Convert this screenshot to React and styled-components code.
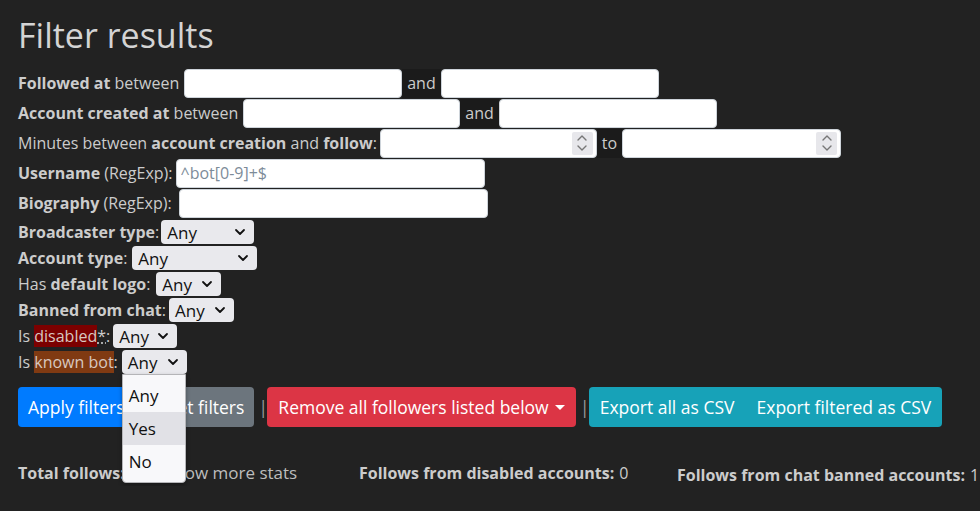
import React from "react";
import styled, { createGlobalStyle } from "styled-components";

const GlobalStyle = createGlobalStyle`
  html, body { margin: 0; padding: 0; background: #222222; }
  body {
    color: #cccccc;
    font-family: "Open Sans", "Noto Sans", "Liberation Sans", sans-serif;
    font-size: 16px;
    overflow: hidden;
  }
  * { box-sizing: border-box; }
`;

const Page = styled.div`
  padding: 11px 18px 0 18px;
`;

const Title = styled.h1`
  margin: 0 0 9px 0;
  font-size: 34px;
  font-weight: 400;
  line-height: 48px;
  color: #d4d4d4;
`;

const Row = styled.div`
  display: flex;
  align-items: center;
  height: ${(p) => p.$h || 30}px;
  margin-top: ${(p) => p.$mt || 0}px;
  white-space: nowrap;
`;

const Label = styled.span`
  margin-right: ${(p) => (p.$gap === undefined ? 5 : p.$gap)}px;
  b { font-weight: 700; }
`;

const TextInput = styled.input`
  width: ${(p) => p.$w}px;
  height: 29px;
  border: 1px solid #ced4da;
  border-radius: 4px;
  background: #fff;
  font: inherit;
  padding: 0 4px;
  color: #333;
  &::placeholder { color: #7d8c99; }
`;

const Joiner = styled.span`
  height: 29px;
  display: flex;
  align-items: center;
  padding: 0 5px;
  background: #1b1b1b;
`;

const NumberBox = styled.div`
  width: ${(p) => p.$w}px;
  height: 29px;
  display: flex;
  align-items: center;
  background: #fff;
  border: 1px solid #ced4da;
  border-radius: 4px;
  padding-right: 3px;
`;

const BareInput = styled.input`
  flex: 1;
  min-width: 0;
  border: none;
  outline: none;
  background: transparent;
  font: inherit;
  padding: 0 4px;
`;

const Spinner = styled.div`
  width: 21px;
  height: 23px;
  background: #e7e7eb;
  border-radius: 2px;
  display: flex;
  align-items: center;
  justify-content: center;
`;

const SelectWrap = styled.div`
  position: relative;
`;

const SelectBox = styled.div`
  width: ${(p) => p.$w}px;
  height: 24px;
  display: flex;
  align-items: center;
  justify-content: space-between;
  padding: 0 8px 0 6px;
  background: #e9e9ed;
  border-radius: 4px;
  color: #111;
  font-size: 17px;
`;

const Menu = styled.div`
  position: absolute;
  top: 100%;
  left: 0;
  width: 64px;
  background: #f8f8fa;
  border: 1px solid #b5b5b8;
  border-radius: 0 0 4px 4px;
  box-shadow: 0 2px 4px rgba(0, 0, 0, 0.3);
  padding: 4px 0;
  z-index: 10;
`;

const MenuItem = styled.div`
  height: 33px;
  display: flex;
  align-items: center;
  padding: 0 6px;
  font-size: 17px;
  color: #111;
  background: ${(p) => (p.$active ? "#e1e1e6" : "transparent")};
`;

const Mark = styled.span`
  background: ${(p) => p.$bg};
  color: #d8c8c0;
`;

const Abbr = styled.abbr`
  text-decoration: underline dotted;
  cursor: help;
`;

const ButtonRow = styled.div`
  display: flex;
  align-items: center;
  gap: 4px;
  margin-top: 12px;
`;

const Button = styled.button`
  height: 40px;
  padding: 0 ${(p) => p.$px || 11}px;
  font: inherit;
  font-size: 17.5px;
  color: #fff;
  border: none;
  border-radius: ${(p) => p.$radius || "4px"};
  background: ${(p) => p.$bg};
  display: flex;
  align-items: center;
  white-space: nowrap;
  flex-shrink: 0;
`;

const Caret = styled.span`
  display: inline-block;
  margin-left: 6px;
  border-left: 5px solid transparent;
  border-right: 5px solid transparent;
  border-top: 5px solid #fff;
`;

const Sep = styled.span`
  width: 5px;
  text-align: center;
  overflow: visible;
  color: #999;
  font-size: 18px;
`;

const Group = styled.div`
  display: flex;
  flex-shrink: 0;
`;

const StatsRow = styled.div`
  display: flex;
  margin-top: 32px;
  white-space: nowrap;
`;

const Stat = styled.div`
  width: ${(p) => p.$w}px;
  flex-shrink: 0;
  margin-top: ${(p) => p.$mt || 0}px;
  display: flex;
  align-items: center;
  b { font-weight: 700; margin-right: 5px; }
`;

const LinkText = styled.span`
  margin-left: 26px;
  color: #bdbdbd;
  font-size: 17px;
`;

function Chevron({ size = 12 }) {
  return (
    <svg width={size} height={size} viewBox="0 0 12 12" fill="none">
      <path d="M2 4l4 4 4-4" stroke="#111" strokeWidth="1.8" strokeLinecap="round" strokeLinejoin="round" />
    </svg>
  );
}

function SpinIcon() {
  return (
    <svg width="12" height="18" viewBox="0 0 12 18" fill="none">
      <path d="M2 6l4-4 4 4" stroke="#777" strokeWidth="1.4" strokeLinecap="round" strokeLinejoin="round" />
      <path d="M2 12l4 4 4-4" stroke="#777" strokeWidth="1.4" strokeLinecap="round" strokeLinejoin="round" />
    </svg>
  );
}

function Select({ w, open }) {
  return (
    <SelectWrap>
      <SelectBox $w={w}>
        <span>Any</span>
        <Chevron />
      </SelectBox>
      {open && (
        <Menu>
          <MenuItem>Any</MenuItem>
          <MenuItem $active>Yes</MenuItem>
          <MenuItem>No</MenuItem>
        </Menu>
      )}
    </SelectWrap>
  );
}

export default function App() {
  return (
    <>
      <GlobalStyle />
      <Page>
        <Title>Filter results</Title>
        <Row>
          <Label><b>Followed at</b> between</Label>
          <TextInput $w={218} />
          <Joiner>and</Joiner>
          <TextInput $w={218} />
        </Row>
        <Row>
          <Label><b>Account created at</b> between</Label>
          <TextInput $w={217} />
          <Joiner>and</Joiner>
          <TextInput $w={218} />
        </Row>
        <Row>
          <Label $gap={3}>Minutes between <b>account creation</b> and <b>follow</b>:</Label>
          <NumberBox $w={217}>
            <BareInput />
            <Spinner><SpinIcon /></Spinner>
          </NumberBox>
          <Joiner>to</Joiner>
          <NumberBox $w={219}>
            <BareInput />
            <Spinner><SpinIcon /></Spinner>
          </NumberBox>
        </Row>
        <Row>
          <Label $gap={3}><b>Username</b> (RegExp):</Label>
          <TextInput $w={309} placeholder="^bot[0-9]+$" />
        </Row>
        <Row>
          <Label $gap={7}><b>Biography</b> (RegExp):</Label>
          <TextInput $w={309} />
        </Row>
        <Row $h={26} $mt={1}>
          <Label $gap={2}><b>Broadcaster type</b>:</Label>
          <Select w={93} />
        </Row>
        <Row $h={26}>
          <Label $gap={5}><b>Account type</b>:</Label>
          <Select w={125} />
        </Row>
        <Row $h={26}>
          <Label $gap={6}>Has <b>default logo</b>:</Label>
          <Select w={65} />
        </Row>
        <Row $h={26}>
          <Label $gap={3}><b>Banned from chat</b>:</Label>
          <Select w={65} />
        </Row>
        <Row $h={26}>
          <Label $gap={3}>Is <Mark $bg="#7c0000">disabled</Mark><Abbr title="">*</Abbr>:</Label>
          <Select w={64} />
        </Row>
        <Row $h={26}>
          <Label $gap={4}>Is <Mark $bg="#803a12">known bot</Mark>:</Label>
          <Select w={65} open />
        </Row>
        <ButtonRow>
          <Button $bg="#007bff" $px={10}>Apply filters</Button>
          <Button $bg="#6c757d" $px={10}>Reset filters</Button>
          <Sep>|</Sep>
          <Button $bg="#dc3545">Remove all followers listed below<Caret /></Button>
          <Sep>|</Sep>
          <Group>
            <Button $bg="#17a2b8" $radius="4px 0 0 4px">Export all as CSV</Button>
            <Button $bg="#17a2b8" $radius="0 4px 4px 0">Export filtered as CSV</Button>
          </Group>
        </ButtonRow>
        <StatsRow>
          <Stat $w={341}>
            <b>Total follows:</b>1
            <LinkText>Show more stats</LinkText>
          </Stat>
          <Stat $w={318}>
            <b>Follows from disabled accounts:</b>0
          </Stat>
          <Stat $w={320} $mt={5}>
            <b>Follows from chat banned accounts:</b>1
          </Stat>
        </StatsRow>
      </Page>
    </>
  );
}
